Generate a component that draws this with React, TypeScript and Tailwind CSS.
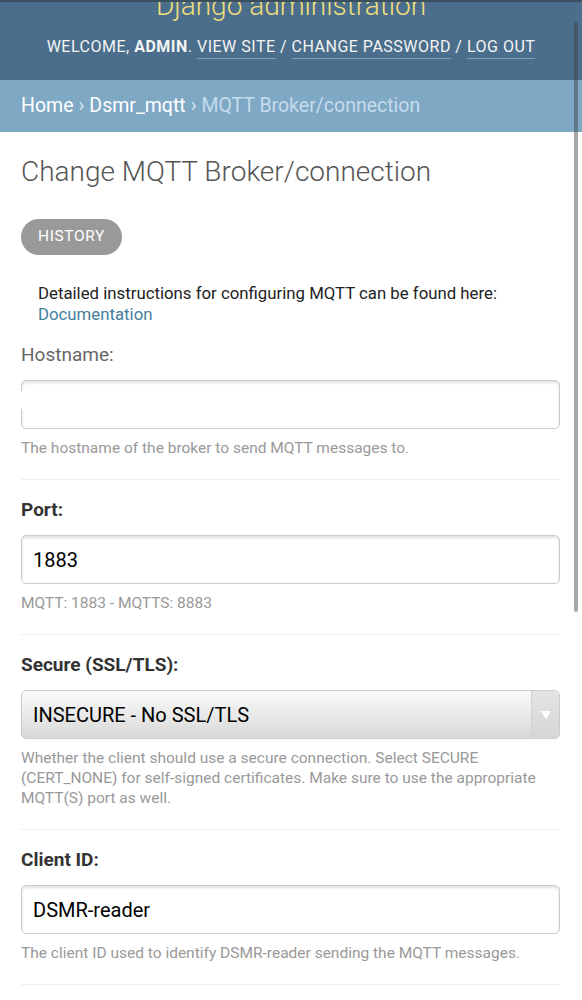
import React from "react";

const help = "text-[15.5px] leading-5 text-[#999]";

function Field({
  label,
  bold = true,
  children,
  helpText,
}: {
  label: string;
  bold?: boolean;
  children: React.ReactNode;
  helpText: React.ReactNode;
}) {
  return (
    <div className="border-b border-[#eee] pt-[18px] pb-[21px]">
      <label
        className={`block text-[19px] leading-6 ${bold ? "font-bold text-[#333]" : "text-[#666]"}`}
      >
        {label}
      </label>
      <div className="mt-[13px]">{children}</div>
      <div className={`${help} mt-[9px]`}>{helpText}</div>
    </div>
  );
}

function TextInput({ value }: { value: string }) {
  return (
    <div className="h-[49px] rounded-[5px] border border-[#ccc] bg-white px-[11px] flex items-center text-[20px] text-black shadow-[inset_0_2px_3px_rgba(0,0,0,0.12)]">
      {value}
    </div>
  );
}

export default function App() {
  return (
    <div
      className="relative min-h-[1000px] bg-white overflow-hidden"
      style={{ fontFamily: "Roboto, 'Liberation Sans', sans-serif" }}
    >
      {/* Header */}
      <header className="h-[80px] bg-[#4a6e8b] border-t-2 border-[#3a4f60] flex flex-col items-center overflow-hidden">
        <div className="-mt-[14px] text-[28px] leading-9 font-light text-[#f0de7c]">
          Django administration
        </div>
        <div className="mt-[11px] text-[16px] uppercase tracking-[0.5px] text-[#f4f4f4]">
          Welcome, <strong className="font-bold">admin</strong>.{" "}
          <a className="border-b border-[#7f9fb8] pb-[2px]">View site</a> /{" "}
          <a className="border-b border-[#7f9fb8] pb-[2px]">Change password</a> /{" "}
          <a className="border-b border-[#7f9fb8] pb-[2px]">Log out</a>
        </div>
      </header>

      {/* Breadcrumbs */}
      <nav className="h-[52px] bg-[#7fa8c5] px-[21px] flex items-center text-[19.5px] text-white">
        <a>Home</a>
        <span className="mx-[5px] text-[#dbe8f1]">›</span>
        <a>Dsmr_mqtt</a>
        <span className="mx-[5px] text-[#dbe8f1]">›</span>
        <span className="text-[#c5dcec]">MQTT Broker/connection</span>
      </nav>

      <main className="px-[21px] pr-[22px]">
        <h1 className="mt-[22px] text-[28px] leading-9 font-light text-[#555]">
          Change MQTT Broker/connection
        </h1>

        <button className="mt-[29px] h-[36px] px-[17px] rounded-full bg-[#999] text-[15.5px] uppercase tracking-[0.6px] text-white">
          History
        </button>

        <div className="mt-[28px] pl-[17px] text-[16.8px] leading-[21px] text-[#222]">
          Detailed instructions for configuring MQTT can be found here:
          <br />
          <a className="text-[#447e9b]">Documentation</a>
        </div>

        <div className="relative">
          <Field label="Hostname:" bold={false} helpText="The hostname of the broker to send MQTT messages to.">
            <TextInput value="" />
          </Field>
          {/* redacted spots */}
          <div className="absolute left-[-2px] top-[64px] w-[16px] h-[22px] bg-white rounded-full" />
          <div className="absolute left-[80px] top-[87px] w-[100px] h-[6px] bg-white" />
        </div>

        <Field label="Port:" helpText="MQTT: 1883 - MQTTS: 8883">
          <TextInput value="1883" />
        </Field>

        <Field
          label="Secure (SSL/TLS):"
          helpText="Whether the client should use a secure connection. Select SECURE (CERT_NONE) for self-signed certificates. Make sure to use the appropriate MQTT(S) port as well."
        >
          <div className="h-[49px] rounded-[5px] border border-[#ccc] bg-gradient-to-b from-[#fafafa] to-[#d9d9d9] flex items-stretch text-[20px] text-black">
            <div className="flex-1 flex items-center px-[11px]">INSECURE - No SSL/TLS</div>
            <div className="w-[28px] border-l border-[#d0d0d0] flex items-center justify-center bg-gradient-to-b from-[#e4e4e4] to-[#d6d6d6] rounded-r-[5px]">
              <svg width="10" height="8" viewBox="0 0 10 8">
                <path d="M0 0 L10 0 L5 8 Z" fill="#fff" />
              </svg>
            </div>
          </div>
        </Field>

        <Field label="Client ID:" helpText="The client ID used to identify DSMR-reader sending the MQTT messages.">
          <TextInput value="DSMR-reader" />
        </Field>
      </main>

      {/* Scrollbar overlay */}
      <div className="absolute left-[574px] top-[22px] w-[4px] h-[590px] rounded-full bg-[rgba(60,60,60,0.45)]" />
    </div>
  );
}
